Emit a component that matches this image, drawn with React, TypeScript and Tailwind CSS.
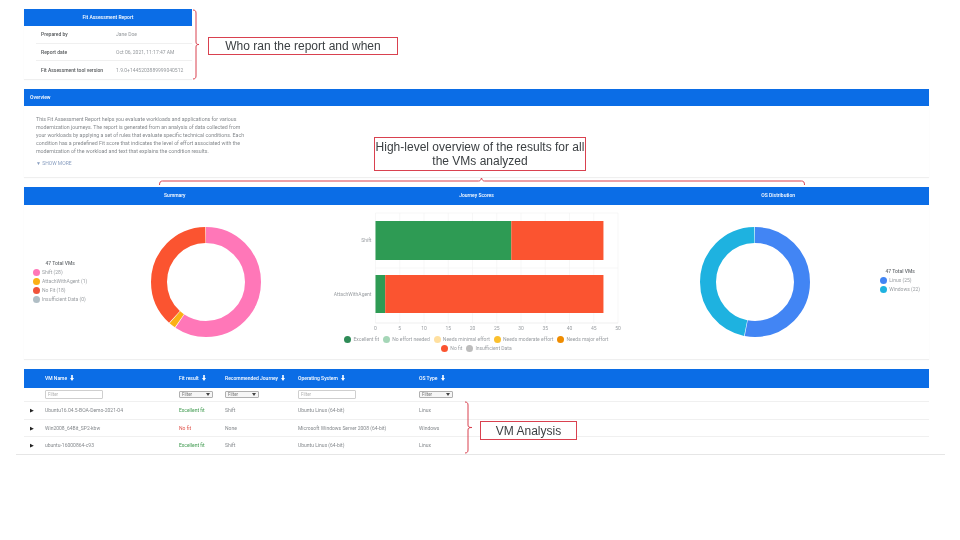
import React from 'react';

const BLUE = '#0b6de6';

interface Segment {
  value: number;
  color: string;
}

const Donut = ({ segments }: { segments: Segment[] }) => {
  const total = segments.reduce((sum, s) => sum + s.value, 0);
  let offset = 0;
  return (
    <svg width="112" height="112" viewBox="0 0 112 112" className="shrink-0">
      <g transform="rotate(-90 56 56)">
        {segments.map((s) => {
          const el = (
            <circle
              key={s.color}
              cx="56"
              cy="56"
              r="47"
              fill="none"
              stroke={s.color}
              strokeWidth="16"
              pathLength={total}
              strokeDasharray={`${s.value - total * 0.002} ${total - s.value + total * 0.002}`}
              strokeDashoffset={-offset}
            />
          );
          offset += s.value;
          return el;
        })}
      </g>
    </svg>
  );
};

const Dot = ({ color }: { color: string }) => (
  <span
    className="w-[7px] h-[7px] rounded-full shrink-0"
    style={{ backgroundColor: color }}
  />
);

const DonutLegend = ({ items }: { items: [string, string][] }) => (
  <div className="w-fit flex flex-col text-[5px] leading-[9px] text-[#9a9ea2]">
    <div className="font-medium text-[#6b6f73] text-center">47 Total VMs</div>
    {items.map(([label, color]) => (
      <div key={label} className="flex items-center gap-[2px] whitespace-nowrap">
        <Dot color={color} />
        <span>{label}</span>
      </div>
    ))}
  </div>
);

const BarChart = () => {
  const x0 = 49.5;
  const unit = 4.85;
  const ticks = [0, 5, 10, 15, 20, 25, 30, 35, 40, 45, 50];
  return (
    <svg width="302" height="130" viewBox="0 0 302 130" className="shrink-0">
      {ticks.map((t) => (
        <g key={t}>
          <line x1={x0 + t * unit} x2={x0 + t * unit} y1="8" y2="118" stroke="#f2f2f2" strokeWidth="0.6" />
          <text x={x0 + t * unit} y="125" fontSize="5" fill="#9a9ea2" textAnchor="middle">
            {t}
          </text>
        </g>
      ))}
      <line x1={x0} x2={x0 + 50 * unit} y1="8" y2="8" stroke="#f2f2f2" strokeWidth="0.6" />
      <line x1={x0} x2={x0 + 50 * unit} y1="118" y2="118" stroke="#e4e4e4" strokeWidth="0.6" />
      <line x1={x0} x2={x0 + 50 * unit} y1="63" y2="63" stroke="#f2f2f2" strokeWidth="0.6" />
      <rect x={x0} y="16" width={28 * unit} height="39" fill="#2e9b54" />
      <rect x={x0 + 28 * unit} y="16" width={19 * unit} height="39" fill="#fb5430" />
      <rect x={x0} y="70" width={2 * unit} height="38" fill="#2e9b54" />
      <rect x={x0 + 2 * unit} y="70" width={45 * unit} height="38" fill="#fb5430" />
      <text x="45.5" y="37" fontSize="5" fill="#9a9ea2" textAnchor="end">
        Shift
      </text>
      <text x="45.5" y="91" fontSize="5" fill="#9a9ea2" textAnchor="end">
        AttachWithAgent
      </text>
    </svg>
  );
};

const scoreLegend: [string, string][] = [
  ['Excellent fit', '#2e8b57'],
  ['No effort needed', '#a5d6b7'],
  ['Needs minimal effort', '#ffe0a0'],
  ['Needs moderate effort', '#fbc02d'],
  ['Needs major effort', '#ef8c00'],
  ['No fit', '#fb5430'],
  ['Insufficient Data', '#bdbdbd'],
];

const reportRows = [
  ['Prepared by', 'Jane Doe'],
  ['Report date', 'Oct 06, 2021, 11:17:47 AM'],
  ['Fit Assessment tool version', '1.9.0+1445203889999040512'],
];

const vmRows = [
  ['Ubuntu16.04.5-BOA-Demo-2021-04', 'Excellent fit', 'Shift', 'Ubuntu Linux (64-bit)', 'Linux'],
  ['Win2008_64Bit_SP2-kbw', 'No fit', 'None', 'Microsoft Windows Server 2008 (64-bit)', 'Windows'],
  ['ubuntu-16000864-c93', 'Excellent fit', 'Shift', 'Ubuntu Linux (64-bit)', 'Linux'],
];

const tableCols = 'grid grid-cols-[21px_134px_46px_73px_121px_1fr] items-center';

const Sort = () => (
  <svg width="4" height="6" viewBox="0 0 4 6" className="inline ml-[2px] align-[-1px]">
    <path d="M1.200 0h1.600v3H4L2 6 0 3h1.200z" fill="#fff" />
  </svg>
);

const FilterInput = ({ width }: { width: string }) => (
  <div className={`${width} h-[9px] border border-[#cfcfcf] rounded-[1px] text-[4.500px] leading-[7px] pl-[2px] text-[#b0b0b0]`}>
    Filter
  </div>
);

const FilterSelect = () => (
  <div className="w-[34px] h-[7px] border border-[#b0b0b0] rounded-[1px] bg-[#f6f6f6] flex items-center justify-between px-[2px] text-[4.500px] leading-[5px] text-[#777]">
    <span>Filter</span>
    <svg width="4" height="3" viewBox="0 0 4 3">
      <path d="M0 0h4L2 3z" fill="#444" />
    </svg>
  </div>
);

const Callout = ({ className, children }: { className: string; children: React.ReactNode }) => (
  <div
    className={`absolute border border-[#d9414f] bg-white flex items-center justify-center text-center text-[12px] leading-[14px] text-[#3c4043] font-['Liberation_Sans',sans-serif] ${className}`}
  >
    {children}
  </div>
);

export default function App() {
  return (
    <div className="relative w-[960px] h-[540px] overflow-hidden bg-white pt-[9px] pl-[24px] pr-[31px] font-['Roboto',sans-serif] blur-[0.6px]">
      {/* report info */}
      <div className="w-[168px] h-[70px] shadow-[0_1px_1px_#efefef]">
        <div
          className="h-[17px] flex items-center justify-center text-[5px] font-medium text-white"
          style={{ backgroundColor: BLUE }}
        >
          Fit Assessment Report
        </div>
        {reportRows.map(([label, value], i) => (
          <div
            key={label}
            className={`ml-[12px] pl-[5px] pt-[1px] h-[17.600px] grid grid-cols-[75px_1fr] items-center text-[5px] ${
              i < 2 ? 'border-b border-[#f0f0f0]' : ''
            }`}
          >
            <span className="font-medium text-[#55585b]">{label}</span>
            <span className="text-[#95999d] whitespace-nowrap">{value}</span>
          </div>
        ))}
      </div>

      {/* overview */}
      <div className="mt-[10px] h-[88px] shadow-[0_1px_1px_#efefef]">
        <div
          className="h-[17px] flex items-center pl-[6px] text-[5px] font-medium text-white"
          style={{ backgroundColor: BLUE }}
        >
          Overview
        </div>
        <div className="pl-[12px] pt-[9px]">
          <p className="text-[5.250px] leading-[8px] text-[#85898d] whitespace-nowrap">
            This Fit Assessment Report helps you evaluate workloads and applications for various
            <br />
            modernization journeys. The report is generated from an analysis of data collected from
            <br />
            your workloads by applying a set of rules that evaluate specific technical conditions. Each
            <br />
            condition has a predefined Fit score that indicates the level of effort associated with the
            <br />
            modernization of the workload and text that explains the condition results.
          </p>
          <div className="mt-[4px] text-[5px] leading-[8px] text-[#8a9fc0] whitespace-nowrap">▼ SHOW MORE</div>
        </div>
      </div>

      {/* charts */}
      <div className="mt-[10px] h-[172px] shadow-[0_1px_1px_#efefef]">
        <div
          className="h-[18px] grid grid-cols-3 items-center text-center text-[5px] font-medium text-white"
          style={{ backgroundColor: BLUE }}
        >
          <span>Summary</span>
          <span>Journey Scores</span>
          <span>OS Distribution</span>
        </div>
        <div className="h-[154px] grid grid-cols-3">
          <div className="flex items-center pl-[9px]">
            <div className="w-[117px] -mt-[2px]">
              <DonutLegend
                items={[
                  ['Shift (28)', '#ff77b8'],
                  ['AttachWithAgent (1)', '#fbb015'],
                  ['No Fit (18)', '#f0533a'],
                  ['Insufficient Data (0)', '#b0bec5'],
                ]}
              />
            </div>
            <Donut
              segments={[
                { value: 28, color: '#ff77b8' },
                { value: 1, color: '#fbb015' },
                { value: 18, color: '#fb5430' },
              ]}
            />
          </div>
          <div className="flex flex-col items-center">
            <BarChart />
            <div className="w-[280px] flex flex-wrap justify-center gap-x-[4px] text-[5px] leading-[9px] text-[#9a9ea2]">
              {scoreLegend.map(([label, color]) => (
                <div key={label} className="flex items-center gap-[2px] whitespace-nowrap">
                  <Dot color={color} />
                  <span>{label}</span>
                </div>
              ))}
            </div>
          </div>
          <div className="flex items-center pl-[72px]">
            <Donut
              segments={[
                { value: 25, color: '#4285f4' },
                { value: 22, color: '#1eb2e0' },
              ]}
            />
            <div className="ml-[69px] -mt-[4px]">
              <DonutLegend
                items={[
                  ['Linux (25)', '#4285f4'],
                  ['Windows (22)', '#1eb2e0'],
                ]}
              />
            </div>
          </div>
        </div>
      </div>

      {/* vm table */}
      <div className="mt-[10px]">
        <div
          className={`${tableCols} h-[19px] text-[5px] font-medium text-white`}
          style={{ backgroundColor: BLUE }}
        >
          <span />
          <span>
            VM Name <Sort />
          </span>
          <span>
            Fit result <Sort />
          </span>
          <span>
            Recommended Journey <Sort />
          </span>
          <span>
            Operating System <Sort />
          </span>
          <span>
            OS Type <Sort />
          </span>
        </div>
        <div className={`${tableCols} h-[14px] border-b border-[#f0f0f0]`}>
          <span />
          <FilterInput width="w-[58px]" />
          <FilterSelect />
          <FilterSelect />
          <FilterInput width="w-[58px]" />
          <FilterSelect />
        </div>
        {vmRows.map((row, i) => (
          <div key={row[0]} className={`${tableCols} pt-[1px] h-[17.500px] border-b border-[#f0f0f0] text-[5px] text-[#85898d]`}>
            <span className="pl-[6px] text-[5px] text-[#222]">▶</span>
            <span className="whitespace-nowrap">{row[0]}</span>
            <span className={`whitespace-nowrap ${i === 1 ? 'text-[#e0524a]' : 'text-[#3f9a4f]'}`}>{row[1]}</span>
            <span>{row[2]}</span>
            <span className="whitespace-nowrap">{row[3]}</span>
            <span>{row[4]}</span>
          </div>
        ))}
      </div>
      <div className="absolute left-[16px] top-[454px] w-[929px] h-[1px] bg-[#e6e6e6]" />

      {/* annotations */}
      <svg className="absolute left-[192px] top-[9px]" width="10" height="72" viewBox="0 0 10 72" fill="none" stroke="#d9414f" strokeWidth="1">
        <path d="M1 1c2 0 3 1 3 3v29c0 2 1 2.500 3 2.500c-2 0-3 .500-3 2.500v29c0 2-1 3-3 3" />
      </svg>
      <Callout className="left-[208px] top-[37px] w-[190px] h-[18px]">Who ran the report and when</Callout>

      <svg className="absolute left-[158px] top-[176px]" width="650" height="10" viewBox="0 0 650 10" fill="none" stroke="#d9414f" strokeWidth="1">
        <path d="M1.500 9c0-3 1-4 3-4h316c1.500 0 2-.500 3-3c1 2.500 1.500 3 3 3h317c2 0 3 1 3 4" />
      </svg>
      <Callout className="left-[374px] top-[137px] w-[212px] h-[34px]">
        High-level overview of the results for all
        <br />
        the VMs analyzed
      </Callout>

      <svg className="absolute left-[464px] top-[401px]" width="10" height="54" viewBox="0 0 10 54" fill="none" stroke="#d9414f" strokeWidth="1">
        <path d="M1 1c2 0 3 1 3 3v20c0 2 1 2.500 4 2.500c-3 0-4 .500-4 2.500v20c0 2-1 3-3 3" />
      </svg>
      <Callout className="left-[480px] top-[421px] w-[97px] h-[19px]">VM Analysis</Callout>
    </div>
  );
}
